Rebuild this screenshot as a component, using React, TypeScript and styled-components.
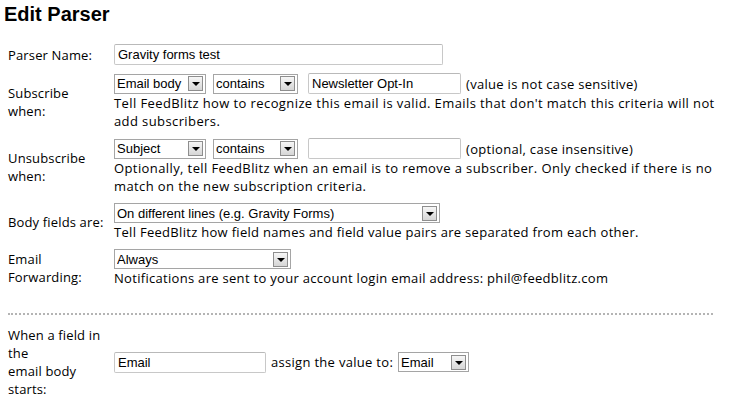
import React from "react";
import styled, { createGlobalStyle } from "styled-components";

const GlobalStyle = createGlobalStyle`
  body {
    margin: 0;
    background: #fff;
    color: #000;
    font-family: "Open Sans", "DejaVu Sans", sans-serif;
  }
`;

const Page = styled.div`
  width: 735px;
  height: 401px;
  overflow: hidden;
`;

const Title = styled.h1`
  margin: 0;
  padding-left: 4px;
  font-family: "Liberation Sans", Arial, sans-serif;
  font-size: 20px;
  font-weight: bold;
  line-height: 28px;
`;

const Form = styled.div`
  display: grid;
  grid-template-columns: 106px 1fr;
  row-gap: 8px;
  align-items: center;
  margin-top: 16px;
  padding-left: 8px;
`;

const Label = styled.div`
  font-size: 13px;
  line-height: 18px;
  letter-spacing: 0.15px;
`;

const Field = styled.div`
  display: flex;
  flex-direction: column;
  align-items: flex-start;
`;

const Controls = styled.div`
  display: flex;
  align-items: center;
  gap: 7px;
`;

const Help = styled.div<{ $spacing?: number }>`
  font-size: 13px;
  line-height: 18px;
  letter-spacing: ${(p) => p.$spacing ?? 0.4}px;
  white-space: nowrap;
`;

const Note = styled.span<{ $shift?: number }>`
  font-size: 13px;
  line-height: 18px;
  letter-spacing: 0.3px;
  white-space: nowrap;
  margin-left: ${(p) => p.$shift ?? 0}px;
`;

const TextInput = styled.input<{ $width: number; $shift?: number }>`
  box-sizing: border-box;
  width: ${(p) => p.$width}px;
  height: 21px;
  margin: 0 0 0 ${(p) => p.$shift ?? 0}px;
  padding: 0 3px;
  border: 1px solid #c8c8c8;
  border-top-color: #b9b9b9;
  border-radius: 2px;
  font-family: "Liberation Sans", Arial, sans-serif;
  font-size: 13px;
  color: #000;
  background: #fff;
  outline: none;
`;

const SelectBox = styled.div<{ $width: number; $shift?: number }>`
  box-sizing: border-box;
  display: flex;
  align-items: center;
  width: ${(p) => p.$width}px;
  height: 20px;
  margin-left: ${(p) => p.$shift ?? 0}px;
  border: 1px solid #a5a5a5;
  background: #fff;
  padding-right: 2px;
`;

const NativeSelect = styled.select`
  flex: 1;
  min-width: 0;
  height: 100%;
  appearance: none;
  -webkit-appearance: none;
  border: none;
  background: transparent;
  padding: 0 0 0 2px;
  margin: 0;
  font-family: "Liberation Sans", Arial, sans-serif;
  font-size: 13px;
  color: #000;
  outline: none;
`;

const ArrowButton = styled.span`
  box-sizing: border-box;
  display: flex;
  align-items: center;
  justify-content: center;
  width: 15px;
  height: 15px;
  border: 1px solid #8e8e8e;
  background: linear-gradient(#f6f6f6, #d6d6d6);

  &::after {
    content: "";
    border-left: 4px solid transparent;
    border-right: 4px solid transparent;
    border-top: 4px solid #000;
    margin-top: 1px;
  }
`;

const Divider = styled.div`
  grid-column: 1 / -1;
  height: 0;
  border-top: 2px dotted #b4b4b4;
  margin: 18px 22px 3px 0;
`;

type SelectProps = { width: number; value: string; options: string[]; shift?: number };

const Select: React.FC<SelectProps> = ({ width, value, options, shift }) => (
  <SelectBox $width={width} $shift={shift}>
    <NativeSelect defaultValue={value}>
      {options.map((o) => (
        <option key={o}>{o}</option>
      ))}
    </NativeSelect>
    <ArrowButton />
  </SelectBox>
);

const App: React.FC = () => {
  return (
    <Page>
      <GlobalStyle />
      <Title>Edit Parser</Title>

      <Form>
        <Label>Parser Name:</Label>
        <Field>
          <TextInput $width={329} defaultValue="Gravity forms test" />
        </Field>

        <Label>
          Subscribe
          <br />
          when:
        </Label>
        <Field>
          <Controls>
            <Select width={92} value="Email body" options={["Email body", "Subject", "From"]} />
            <Select width={85} value="contains" options={["contains", "starts with", "equals"]} />
            <TextInput $width={153} $shift={3} defaultValue="Newsletter Opt-In" />
            <Note $shift={-2}>(value is not case sensitive)</Note>
          </Controls>
          <Help>
            Tell FeedBlitz how to recognize this email is valid. Emails that don't match this criteria will not
            <br />
            add subscribers.
          </Help>
        </Field>

        <Label>
          Unsubscribe
          <br />
          when:
        </Label>
        <Field>
          <Controls>
            <Select width={92} value="Subject" options={["Email body", "Subject", "From"]} />
            <Select width={85} value="contains" options={["contains", "starts with", "equals"]} />
            <TextInput $width={153} $shift={3} defaultValue="" />
            <Note $shift={-2}>(optional, case insensitive)</Note>
          </Controls>
          <Help>
            Optionally, tell FeedBlitz when an email is to remove a subscriber. Only checked if there is no
            <br />
            match on the new subscription criteria.
          </Help>
        </Field>

        <Label>Body fields are:</Label>
        <Field>
          <Select
            width={326}
            value="On different lines (e.g. Gravity Forms)"
            options={["On different lines (e.g. Gravity Forms)", "On the same line"]}
          />
          <Help $spacing={0.3}>Tell FeedBlitz how field names and field value pairs are separated from each other.</Help>
        </Field>

        <Label>
          Email
          <br />
          Forwarding:
        </Label>
        <Field>
          <Select width={177} value="Always" options={["Always", "Never"]} />
          <Help $spacing={0.3}>Notifications are sent to your account login email address: phil@feedblitz.com</Help>
        </Field>

        <Divider />

        <Label>
          When a field in
          <br />
          the
          <br />
          email body
          <br />
          starts:
        </Label>
        <Field>
          <Controls>
            <TextInput $width={152} defaultValue="Email" />
            <Note $shift={-2}>assign the value to:</Note>
            <Select width={71} value="Email" options={["Email", "Name"]} shift={-2} />
          </Controls>
        </Field>
      </Form>
    </Page>
  );
};

export default App;
